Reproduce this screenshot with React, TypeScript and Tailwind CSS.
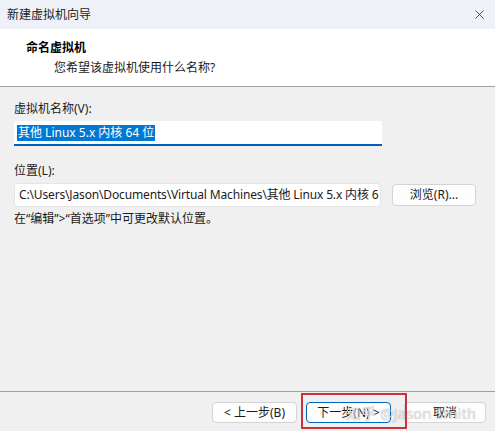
import { X } from 'lucide-react';

const FONT = 'font-["Noto_Sans","Noto_Sans_CJK_SC",sans-serif]';

function Button({ label, primary, className = '' }: { label: string; primary?: boolean; className?: string }) {
  return (
    <div
      className={`h-[21px] flex items-center justify-center rounded-[4px] bg-[#fdfdfd] text-[12px] text-[#1b1b1b] ${
        primary ? 'border border-[#0067c0]' : 'border border-[#d4d4d4]'
      } ${className}`}
    >
      {label}
    </div>
  );
}

export default function App() {
  return (
    <div className={`w-[495px] h-[431px] flex flex-col bg-[#f0f0f0] overflow-hidden ${FONT}`}>
      {/* title bar */}
      <div className="h-[29px] shrink-0 flex items-center justify-between pl-[7px] pr-[8px] bg-[#eef2f8] rounded-tr-[8px]">
        <span className="text-[12px] text-[#1b1b1b]">新建虚拟机向导</span>
        <X className="w-[15px] h-[15px] text-[#1b1b1b]" strokeWidth={1.2} />
      </div>

      {/* page header */}
      <div className="h-[58px] shrink-0 bg-white border-b border-[#a0a0a0] flex flex-col pt-[9px]">
        <span className="pl-[26px] text-[12px] font-bold text-black leading-[20px]">命名虚拟机</span>
        <span className="pl-[54px] text-[12px] text-[#1b1b1b] leading-[20px]">您希望该虚拟机使用什么名称?</span>
      </div>

      {/* form */}
      <div className="flex-1 flex flex-col px-[14px] pt-[13px] text-[12px] text-[#1b1b1b]">
        <span className="leading-[18px]">虚拟机名称(V):</span>
        <div className="mt-[3px] w-[368px] h-[25px] bg-white border-b-2 border-[#005fb8] rounded-t-[3px] flex items-center pl-[3px]">
          <span className="bg-[#0078d4] text-white leading-[16px] px-[1px]">其他 Linux 5.x 内核 64 位</span>
        </div>

        <span className="mt-[16px] leading-[18px]">位置(L):</span>
        <div className="mt-[3px] flex items-center">
          {/* path field scrolled to its start, so the tail is hidden */}
          <div className="w-[367px] h-[24px] bg-white border border-[#e5e5e5] rounded-[3px] flex items-center pl-[4px] overflow-hidden whitespace-nowrap tracking-[-0.15px]">
            C:\Users\Jason\Documents\Virtual Machines\其他 Linux 5.x 内核 6
          </div>
          <Button label="浏览(R)..." className="ml-[11px] w-[84px] h-[22px]" />
        </div>
        <span className="mt-[3px] leading-[18px]">在“编辑”&gt;“首选项”中可更改默认位置。</span>
      </div>

      {/* footer buttons */}
      <div className="h-[40px] shrink-0 border-t border-[#a0a0a0] flex justify-end items-start pt-[10px] pr-[9px]">
        <Button label="< 上一步(B)" className="w-[85px]" />
        <div className="relative ml-[9px]">
          <Button label="下一步(N) >" primary className="w-[85px]" />
          <div className="absolute -left-[5px] -top-[9px] w-[106px] h-[36px] border-2 border-[#c9313c] pointer-events-none" />
        </div>
        <Button label="取消" className="ml-[13px] w-[82px]" />
      </div>

      {/* watermark */}
      <div className="fixed left-[346px] top-[402px] text-[15px] text-white/70 [text-shadow:0_0_1px_rgba(0,0,0,0.45)] pointer-events-none">
        知乎 @Jason Smith
      </div>
    </div>
  );
}
